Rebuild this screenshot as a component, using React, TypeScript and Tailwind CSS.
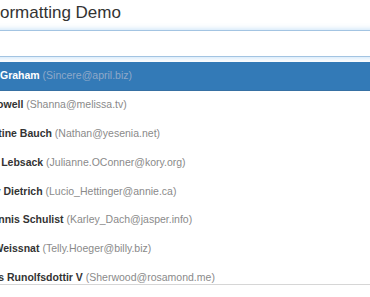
import React from "react";

const users = [
  { name: "Leanne Graham", email: "Sincere@april.biz" },
  { name: "Ervin Howell", email: "Shanna@melissa.tv" },
  { name: "Clementine Bauch", email: "Nathan@yesenia.net" },
  { name: "Patricia Lebsack", email: "Julianne.OConner@kory.org" },
  { name: "Chelsey Dietrich", email: "Lucio_Hettinger@annie.ca" },
  { name: "Mrs. Dennis Schulist", email: "Karley_Dach@jasper.info" },
  { name: "Kurtis Weissnat", email: "Telly.Hoeger@billy.biz" },
  { name: "Nicholas Runolfsdottir V", email: "Sherwood@rosamond.me" },
];

export default function App() {
  return (
    <div
      className="w-[370px] h-[297px] overflow-hidden bg-white"
      style={{ fontFamily: '"Liberation Sans", Arial, sans-serif' }}
    >
      <div className="-ml-[60px] w-[500px] flex flex-col">
        <div className="pt-[3px] pl-[49.6px] h-[30px] text-[17px] leading-[20px] text-[#333]">
          Formatting Demo
        </div>
        <div className="h-[27px] border border-[#a3c4e2] bg-white shadow-[0_0_6px_rgba(102,175,233,0.45)]" />
        <div className="mt-[1px] h-[227px] overflow-hidden border-b border-[#d6d6d6] pt-[4px] flex flex-col">
          {users.map((u, i) => (
            <div
              key={u.email}
              className={
                i === 0
                  ? "h-[28.75px] shrink-0 flex items-center pl-[20.3px] whitespace-nowrap text-[10.5px] bg-[#337ab7] border-b border-[#3670a3]"
                  : "h-[28.75px] shrink-0 flex items-center pl-[20.3px] whitespace-nowrap text-[10.5px]"
              }
            >
              <span className={i === 0 ? "font-bold text-white" : "font-bold text-[#333]"}>
                {u.name}
              </span>
              <span className={i === 0 ? "text-[#8fa9c9]" : "text-[#8a8a8a]"}>
                &nbsp;({u.email})
              </span>
            </div>
          ))}
        </div>
      </div>
    </div>
  );
}
